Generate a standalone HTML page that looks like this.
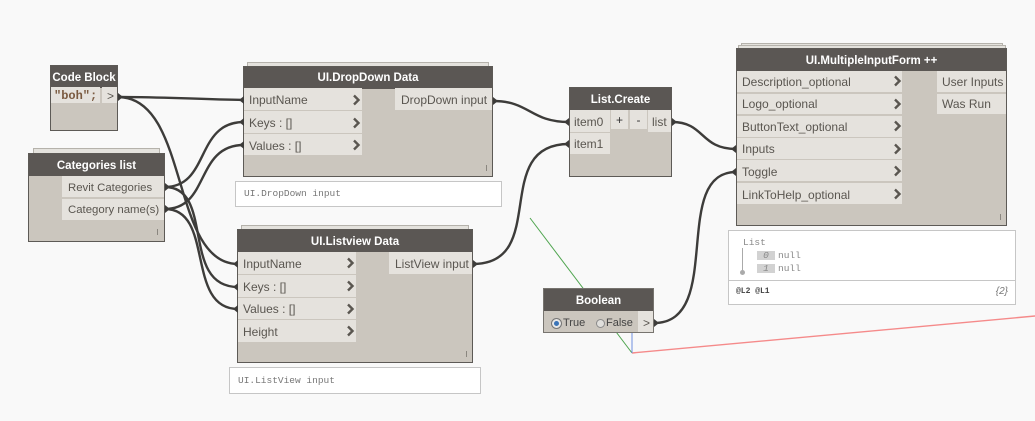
<!DOCTYPE html>
<html><head><meta charset="utf-8">
<style>
html,body{margin:0;padding:0;background:#f9f9f9}
#c{position:relative;width:1035px;height:421px;overflow:hidden;background:#f9f9f9;font-family:"Liberation Sans",sans-serif;font-size:12px;color:#5a5650}
#c div{position:absolute;box-sizing:border-box}
.s{background:#e4e2dd;border:1px solid #b5b2ab;border-bottom:0;height:6px}
.n{background:#cbc6be;border:1px solid #5d5a56}
.h{background:#5b5754;color:#fff;font-weight:bold;text-align:center;line-height:24px;font-size:11.5px;left:0;right:0;top:0;height:22px}
.r{background:#e5e2dd;line-height:23px;padding-left:5px;white-space:nowrap}
.p{background:#fff;border:1px solid #c6c6c6;font-family:"Liberation Mono",monospace;font-size:9.5px;color:#777}
.g{position:absolute;width:5px;height:1px;background:#8a867f}
svg{position:absolute;left:0;top:0}
</style></head><body><div id="c">

<svg width="1035" height="421">
<path d="M530 218L632 353" stroke="#4fa54f" stroke-width="1" fill="none"/>
<path d="M632 353L1035 316" stroke="#f58a8a" stroke-width="1.4" fill="none"/>
<path d="M632 333V353" stroke="#6f8fe0" stroke-width="1" fill="none"/>
</svg>

<div class="s" style="left:33px;top:148px;width:127px"></div>
<div class="n" style="left:28px;top:153px;width:137px;height:89px"><div class="h">Categories list</div></div>
<div class="r" style="left:62px;top:176px;width:102px;height:21px;line-height:25px;font-size:11.4px;padding-left:6px">Revit Categories</div>
<div class="r" style="left:62px;top:199px;width:102px;height:21px;font-size:11.4px;padding-left:6px">Category name(s)</div>
<div class="g" style="left:157px;top:229px;width:1px;height:6px"></div>

<div class="n" style="left:50px;top:65px;width:68px;height:66px"><div class="h">Code Block</div></div>
<div class="r" style="left:51px;top:87px;width:49px;height:16px;line-height:18px;padding-left:3px;font-family:'Liberation Mono',monospace;font-size:12px;color:#7a5a40;font-weight:bold">"boh";</div>
<div class="r" style="left:102px;top:87px;width:15px;height:16px;line-height:18px;padding-left:5px">&gt;</div>

<div class="s" style="left:247px;top:62px;width:242px"></div>
<div class="n" style="left:243px;top:66px;width:250px;height:111px"><div class="h" style="line-height:23px">UI.DropDown Data</div></div>
<div class="r" style="left:244px;top:88px;width:118px;height:22px;line-height:25px">InputName</div>
<div class="r" style="left:244px;top:111px;width:118px;height:22px;line-height:25px">Keys : []</div>
<div class="r" style="left:244px;top:134px;width:118px;height:21px;line-height:24px">Values : []</div>
<div class="r" style="left:395px;top:88px;width:97px;height:22px;line-height:25px;padding-left:6px">DropDown input</div>
<div class="g" style="left:486px;top:165px;width:1px;height:6px"></div>
<div class="p" style="left:235px;top:181px;width:267px;height:26px;padding:6px 8px">UI.DropDown input</div>

<div class="s" style="left:241px;top:225px;width:228px"></div>
<div class="n" style="left:237px;top:229px;width:236px;height:134px"><div class="h">UI.Listview Data</div></div>
<div class="r" style="left:238px;top:252px;width:118px;height:22px;line-height:25px">InputName</div>
<div class="r" style="left:238px;top:275px;width:118px;height:22px;line-height:25px">Keys : []</div>
<div class="r" style="left:238px;top:298px;width:118px;height:21px;line-height:23px">Values : []</div>
<div class="r" style="left:238px;top:320px;width:118px;height:22px;line-height:25px">Height</div>
<div class="r" style="left:389px;top:252px;width:83px;height:22px;line-height:25px;padding-left:6px">ListView input</div>
<div class="g" style="left:466px;top:351px;width:1px;height:6px"></div>
<div class="p" style="left:229px;top:367px;width:252px;height:27px;padding:7px 8px">UI.ListView input</div>

<div class="n" style="left:569px;top:87px;width:103px;height:90px"><div class="h">List.Create</div></div>
<div class="r" style="left:570px;top:110px;width:40px;height:22px;line-height:25px;padding-left:4px">item0</div>
<div class="r" style="left:570px;top:133px;width:40px;height:21px;padding-left:4px">item1</div>
<div class="r" style="left:611px;top:110px;width:17px;height:19px;padding:0;text-align:center;line-height:20px;color:#333">+</div>
<div class="r" style="left:630px;top:110px;width:17px;height:19px;padding:0;text-align:center;line-height:20px;color:#333">-</div>
<div class="r" style="left:648px;top:110px;width:23px;height:22px;line-height:25px;padding-left:4px">list</div>

<div class="n" style="left:543px;top:288px;width:111px;height:45px;border-color:#77746f"><div class="h">Boolean</div></div>
<div class="r" style="left:638px;top:311px;width:15px;height:21px;line-height:25px;padding-left:5px">&gt;</div>
<div style="left:552px;top:319px;width:9px;height:9px;border-radius:50%;background:#3a74b8;border:2px solid #e8e8e8;outline:1px solid #777"></div>
<div style="left:563px;top:311px;line-height:25px;color:#444;font-size:11px">True</div>
<div style="left:596px;top:319px;width:9px;height:9px;border-radius:50%;background:#e0dfdc;border:1px solid #8a8a8a"></div>
<div style="left:606px;top:311px;line-height:25px;color:#444;font-size:11px">False</div>

<div class="s" style="left:741px;top:43px;width:262px"></div>
<div class="s" style="left:738px;top:45px;width:268px;height:4px"></div>
<div class="n" style="left:736px;top:48px;width:271px;height:178px"><div class="h">UI.MultipleInputForm ++</div></div>
<div class="r" style="left:737px;top:71px;width:165px;height:21px">Description_optional</div>
<div class="r" style="left:737px;top:94px;width:165px;height:20px;line-height:21px">Logo_optional</div>
<div class="r" style="left:737px;top:116px;width:165px;height:21px">ButtonText_optional</div>
<div class="r" style="left:737px;top:138px;width:165px;height:21px">Inputs</div>
<div class="r" style="left:737px;top:160px;width:165px;height:21px;line-height:25px">Toggle</div>
<div class="r" style="left:737px;top:183px;width:165px;height:21px;line-height:25px">LinkToHelp_optional</div>
<div class="r" style="left:937px;top:71px;width:69px;height:21px">User Inputs</div>
<div class="r" style="left:937px;top:94px;width:69px;height:20px;line-height:21px">Was Run</div>
<div class="g" style="left:1000px;top:214px;width:1px;height:6px"></div>

<div class="p" style="left:728px;top:230px;width:288px;height:75px;font-size:9.5px">
<div style="left:14px;top:6px;color:#8a8a8a">List</div>
<div style="left:13px;top:17px;width:1px;height:24px;background:#aaa"></div>
<div style="left:11px;top:39px;width:5px;height:5px;border-radius:50%;background:#aaa"></div>
<div style="left:28px;top:20px;width:18px;height:9px;background:#d2d2d2;text-align:center;line-height:9px;font-style:italic;color:#888">0</div>
<div style="left:49px;top:19px;color:#888">null</div>
<div style="left:28px;top:33px;width:18px;height:9px;background:#d2d2d2;text-align:center;line-height:9px;font-style:italic;color:#888">1</div>
<div style="left:49px;top:32px;color:#888">null</div>
<div style="left:0;right:0;top:49px;height:1px;background:#c6c6c6"></div>
<div style="left:7px;top:56px;font-size:8px;color:#444;font-weight:bold;white-space:nowrap">@L2 @L1</div>
<div style="right:7px;top:55px;font-size:10px;font-style:italic;color:#777;font-family:'Liberation Sans',sans-serif">{2}</div>
</div>

<svg width="1035" height="421">
<g fill="none" stroke="#3d3c3a" stroke-width="2.4">
<path d="M118 97C170 97 190 99 244 100"/>
<path d="M118 97C190 97 170 264 238 264"/>
<path d="M165 187C210 187 195 122 244 122"/>
<path d="M165 209C210 209 195 145 244 145"/>
<path d="M165 187C215 187 180 287 238 287"/>
<path d="M165 209C215 209 185 309 238 309"/>
<path d="M493 101C530 101 530 122 569 122"/>
<path d="M473 264C550 264 490 144 569 144"/>
<path d="M672 122C705 122 700 149 736 149"/>
<path d="M654 323C725 323 670 172 736 172"/>
</g>
<g fill="#3d3c3a">
<path d="M244 96v8l-5-4z"/><path d="M244 118v8l-5-4z"/><path d="M244 141v8l-5-4z"/>
<path d="M238 260v8l-5-4z"/><path d="M238 283v8l-5-4z"/><path d="M238 305v8l-5-4z"/>
<path d="M569 118v8l-5-4z"/><path d="M569 140v8l-5-4z"/>
<path d="M736 145v8l-5-4z"/><path d="M736 168v8l-5-4z"/>
<path d="M118 93v8l5-4z"/><path d="M165 183v8l5-4z"/><path d="M165 205v8l5-4z"/>
<path d="M493 97v8l5-4z"/><path d="M473 260v8l5-4z"/><path d="M672 118v8l5-4z"/><path d="M654 319v8l5-4z"/>
</g>
<g fill="none" stroke="#5a5650" stroke-width="2.4">
<path d="M354 95.500l4.500 4.500-4.500 4.500M354 118.500l4.500 4.500-4.500 4.500M354 140.500l4.500 4.500-4.500 4.500"/>
<path d="M348 258.500l4.500 4.500-4.500 4.500M348 281.500l4.500 4.500-4.500 4.500M348 304.500l4.500 4.500-4.500 4.500M348 326.500l4.500 4.500-4.500 4.500"/>
<path d="M895 76.500l4.500 4.500-4.500 4.500M895 99.500l4.500 4.500-4.500 4.500M895 121.500l4.500 4.500-4.500 4.500M895 144.500l4.500 4.500-4.500 4.500M895 166.500l4.500 4.500-4.500 4.500M895 189.500l4.500 4.500-4.500 4.500"/>
</g>
</svg>
</div></body></html>
